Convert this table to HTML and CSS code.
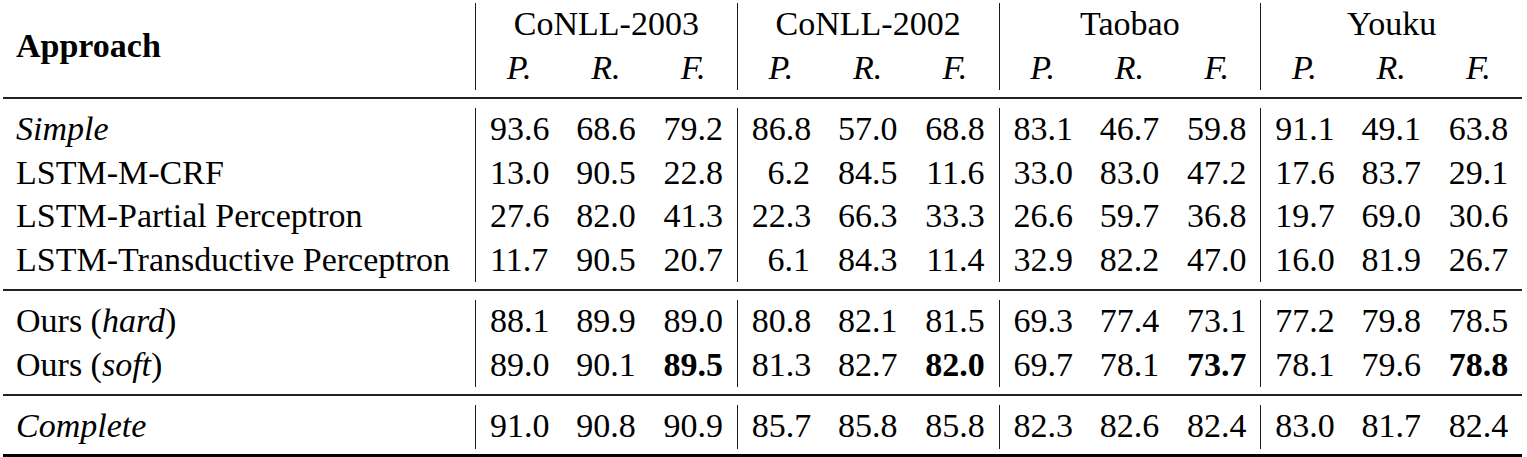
FILE: index.html
```html
<!DOCTYPE html>
<html>
<head>
    <meta charset="UTF-8">
    <title>Results on CoNLL, Taobao and Youku</title>
    <link rel="stylesheet" href="styles.css">
</head>
<body>
    <table class="results">
        <colgroup>
            <col class="col-name">
            <col span="12">
        </colgroup>
        <thead>
            <tr>
                <th rowspan="2" class="name">Approach</th>
                <th colspan="3" class="grp">CoNLL-2003</th>
                <th colspan="3" class="grp">CoNLL-2002</th>
                <th colspan="3" class="grp">Taobao</th>
                <th colspan="3" class="grp">Youku</th>
            </tr>
            <tr class="sub">
                <th class="grp">P.</th><th>R.</th><th>F.</th>
                <th class="grp">P.</th><th>R.</th><th>F.</th>
                <th class="grp">P.</th><th>R.</th><th>F.</th>
                <th class="grp">P.</th><th>R.</th><th>F.</th>
            </tr>
        </thead>
        <tbody>
            <tr class="rule"><td colspan="13"><div></div></td></tr>
            <tr>
                <td class="name"><em>Simple</em></td>
                <td class="grp">93.6</td><td>68.6</td><td>79.2</td>
                <td class="grp">86.8</td><td>57.0</td><td>68.8</td>
                <td class="grp">83.1</td><td>46.7</td><td>59.8</td>
                <td class="grp">91.1</td><td>49.1</td><td>63.8</td>
            </tr>
            <tr>
                <td class="name">LSTM-M-CRF</td>
                <td class="grp">13.0</td><td>90.5</td><td>22.8</td>
                <td class="grp">6.2</td><td>84.5</td><td>11.6</td>
                <td class="grp">33.0</td><td>83.0</td><td>47.2</td>
                <td class="grp">17.6</td><td>83.7</td><td>29.1</td>
            </tr>
            <tr>
                <td class="name">LSTM-Partial Perceptron</td>
                <td class="grp">27.6</td><td>82.0</td><td>41.3</td>
                <td class="grp">22.3</td><td>66.3</td><td>33.3</td>
                <td class="grp">26.6</td><td>59.7</td><td>36.8</td>
                <td class="grp">19.7</td><td>69.0</td><td>30.6</td>
            </tr>
            <tr>
                <td class="name">LSTM-Transductive Perceptron</td>
                <td class="grp">11.7</td><td>90.5</td><td>20.7</td>
                <td class="grp">6.1</td><td>84.3</td><td>11.4</td>
                <td class="grp">32.9</td><td>82.2</td><td>47.0</td>
                <td class="grp">16.0</td><td>81.9</td><td>26.7</td>
            </tr>
            <tr class="rule"><td colspan="13"><div></div></td></tr>
            <tr>
                <td class="name">Ours (<em>hard</em>)</td>
                <td class="grp">88.1</td><td>89.9</td><td>89.0</td>
                <td class="grp">80.8</td><td>82.1</td><td>81.5</td>
                <td class="grp">69.3</td><td>77.4</td><td>73.1</td>
                <td class="grp">77.2</td><td>79.8</td><td>78.5</td>
            </tr>
            <tr>
                <td class="name">Ours (<em>soft</em>)</td>
                <td class="grp">89.0</td><td>90.1</td><td><b>89.5</b></td>
                <td class="grp">81.3</td><td>82.7</td><td><b>82.0</b></td>
                <td class="grp">69.7</td><td>78.1</td><td><b>73.7</b></td>
                <td class="grp">78.1</td><td>79.6</td><td><b>78.8</b></td>
            </tr>
            <tr class="rule"><td colspan="13"><div></div></td></tr>
            <tr>
                <td class="name"><em>Complete</em></td>
                <td class="grp">91.0</td><td>90.8</td><td>90.9</td>
                <td class="grp">85.7</td><td>85.8</td><td>85.8</td>
                <td class="grp">82.3</td><td>82.6</td><td>82.4</td>
                <td class="grp">83.0</td><td>81.7</td><td>82.4</td>
            </tr>
            <tr class="rule bottom"><td colspan="13"><div></div></td></tr>
        </tbody>
    </table>
</body>
</html>
```

FILE: styles.css
```css
* {
    margin: 0;
    box-sizing: border-box;
}

body {
    background: #fff;
    color: #000;
    font-family: "Liberation Serif", serif;
    font-size: 34px;
}

.results {
    width: 1519px;
    margin: 3px 0 0 3px;
    table-layout: fixed;
    border-spacing: 0;
}

.results .col-name {
    width: 472px;
}

.results th,
.results td {
    padding: 0 14px 2.5px;
    line-height: 41px;
    font-weight: normal;
    text-align: right;
    white-space: nowrap;
}

.results th {
    text-align: center;
}

.results .name {
    padding-left: 13px;
    text-align: left;
}

.results th.name {
    font-weight: bold;
    vertical-align: middle;
}

.results .grp {
    border-left: 1px solid #1a1a1a;
}

.results .sub th {
    font-style: italic;
}

.results b {
    font-weight: bold;
}

.rule td {
    padding: 0;
    line-height: 0;
}

.rule div {
    height: 2px;
    margin: 7px 0 9px;
    background: #222;
}

.rule.bottom div {
    height: 3px;
    margin: 5px 0 0;
    background: #000;
}
```
